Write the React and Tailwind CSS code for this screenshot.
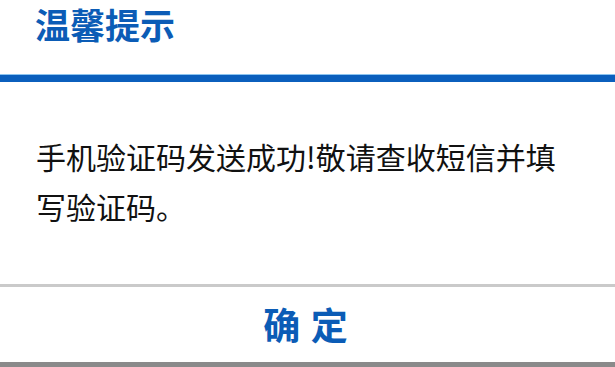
export default function App() {
  const font = { fontFamily: '"Noto Sans CJK SC", "Noto Sans", sans-serif' };
  return (
    <div className="w-[615px] h-[367px] flex flex-col bg-white overflow-hidden" style={font}>
      <div className="h-[74px] flex items-start pl-[35px]">
        <h1 className="text-[35px] leading-[48px] font-bold text-[#0b5cb6]">温馨提示</h1>
      </div>
      <div className="h-px bg-[#8cc4f0]" />
      <div className="h-[7px] bg-[#0b5fbd]" />
      <div className="h-[202px] px-[36px] pt-[49px]">
        <p className="text-[30px] leading-[50px] text-[#111]">
          手机验证码发送成功!敬请查收短信并填写验证码。
        </p>
      </div>
      <div className="h-[3px] bg-[#cacaca]" />
      <div className="h-[75px] flex items-center justify-center pr-[4px]">
        <button className="text-[37px] leading-none font-bold text-[#0b5cb6] [word-spacing:2px]">确 定</button>
      </div>
      <div className="h-[5px] bg-[#8a8a8a]" />
    </div>
  );
}
